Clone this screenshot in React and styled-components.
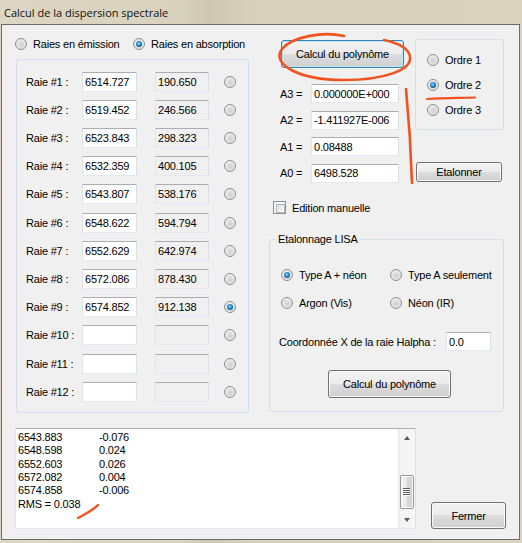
import React from "react";
import styled, { createGlobalStyle, css } from "styled-components";

const GlobalStyle = createGlobalStyle`
  html, body { margin: 0; padding: 0; background: #d9d2bf; }
  body {
    font-family: "Liberation Sans", Arial, sans-serif;
    font-size: 11px;
    letter-spacing: -0.2px;
    color: #000;
  }
  * { box-sizing: border-box; }
`;

const Window = styled.div`
  position: relative;
  width: 522px;
  height: 543px;
  overflow: hidden;
  background: linear-gradient(to right, #ddd6c4 0%, #d8d1bd 35%, #cfc7b2 40%, #d6cfbb 48%, #d9d2bf 100%);
`;

const TitleBar = styled.div`
  height: 24px;
  padding-left: 4px;
  display: flex;
  align-items: center;
  font-family: "Open Sans", "Liberation Sans", sans-serif;
  font-size: 11px;
  letter-spacing: 0;
  color: #111;
`;

const Client = styled.div`
  margin-left: 1px;
  width: 519px;
  height: 516px;
  border: 1px solid #6b6b6b;
  background: #f0f0f0;
  padding-left: 13px;
  display: flex;
  flex-direction: column;
`;

const Top = styled.div`
  display: flex;
  align-items: flex-start;
  gap: 19px;
`;

const LeftCol = styled.div`
  width: 235px;
  display: flex;
  flex-direction: column;
`;

const RightCol = styled.div`
  width: 236px;
  display: flex;
  flex-direction: column;
`;

const ModeRow = styled.div`
  margin-top: 10px;
  height: 17px;
  display: flex;
  align-items: center;
`;

const Option = styled.label`
  display: flex;
  align-items: center;
  gap: 6px;
  height: 16px;
  white-space: nowrap;
  ${(p) => p.$w && css`width: ${p.$w}px;`}
`;

const Radio = styled.span`
  position: relative;
  flex: none;
  width: 12px;
  height: 12px;
  border-radius: 50%;
  border: 1px solid #8e8f8f;
  background: radial-gradient(circle at 55% 60%, #cfcfcf 0%, #e2e2e2 45%, #f7f7f7 100%);
  ${(p) =>
    p.$checked &&
    css`
      &::after {
        content: "";
        position: absolute;
        left: 2px;
        top: 2px;
        width: 6px;
        height: 6px;
        border-radius: 50%;
        background: radial-gradient(circle at 45% 40%, #8fdcff 0%, #2b8fd6 40%, #0d4a7c 80%, #0a3458 100%);
      }
    `}
`;

const Group = styled.div`
  margin: 7px 0 0 1px;
  width: 233px;
  height: 354px;
  border: 1px solid #d5dfe5;
  border-radius: 3px;
  padding: 11.7px 0 0 9px;
  display: flex;
  flex-direction: column;
  gap: 8.2px;
`;

const RaieRow = styled.div`
  display: grid;
  grid-template-columns: 56px 73px 69px 12px;
  height: 20px;
  align-items: center;
`;

const Field = styled.input`
  height: ${(p) => p.$h || 20}px;
  width: ${(p) => p.$w}px;
  padding: 0 0 0 2px;
  border: 1px solid;
  border-color: #abadb3 #dbdfe6 #e3e9ef #e2e3ea;
  background: ${(p) => (p.$ro ? "#f0f0f0" : "#fff")};
  font: inherit;
  letter-spacing: -0.2px;
  color: #000;
  outline: none;
`;

const Button = styled.button`
  width: ${(p) => p.$w}px;
  height: ${(p) => p.$h}px;
  padding: 0;
  border: 1px solid ${(p) => (p.$focus ? "#3c7fb1" : "#707070")};
  border-radius: 3px;
  background: linear-gradient(#f2f2f2 0%, #ebebeb 49%, #dddddd 50%, #cfcfcf 100%);
  box-shadow: inset 0 0 0 1px ${(p) => (p.$focus ? "#bde6f8" : "#fbfbfb")};
  font: inherit;
  letter-spacing: -0.2px;
  color: #000;
`;

const CoeffTop = styled.div`
  margin-top: 14px;
  display: flex;
`;

const CoeffLeft = styled.div`
  width: 146px;
  padding-top: 1px;
  display: flex;
  flex-direction: column;
  & > ${Button} { margin-left: 12px; }
`;

const CoeffList = styled.div`
  margin-top: 16px;
  padding-left: 11px;
  display: flex;
  flex-direction: column;
  gap: 7.5px;
`;

const CoeffRow = styled.div`
  height: 19px;
  display: flex;
  align-items: center;
`;

const CoeffLabel = styled.span`
  width: 31px;
`;

const CoeffRight = styled.div`
  display: flex;
  flex-direction: column;
  & > ${Button} { margin: 32px 0 0 1px; }
`;

const OrdreGroup = styled.div`
  width: 89px;
  height: 91px;
  border: 1px solid #d5dfe5;
  border-radius: 3px;
  padding: 11.7px 0 0 11px;
  display: flex;
  flex-direction: column;
  gap: 9px;
`;

const CheckRow = styled.label`
  margin-top: 18.5px;
  padding-left: 4px;
  height: 13px;
  display: flex;
  align-items: center;
  gap: 6px;
`;

const CheckBox = styled.span`
  width: 13px;
  height: 13px;
  flex: none;
  border: 1px solid #8e8f8f;
  background: #f4f4f4;
  padding: 2px;
  &::before {
    content: "";
    display: block;
    width: 100%;
    height: 100%;
    border: 1px solid #b4b8bd;
    background: linear-gradient(135deg, #d8dade 0%, #eceef0 60%, #fafafa 100%);
  }
`;

const Fieldset = styled.fieldset`
  margin: 18px 0 0 0;
  padding: 0;
  min-width: 0;
  width: 235px;
  border: 1px solid #d5dfe5;
  border-radius: 3px;
`;

const Legend = styled.legend`
  margin-left: 6px;
  padding: 0 2px;
  line-height: 14px;
`;

const LisaBody = styled.div`
  padding: 21px 0 13px 9px;
  display: flex;
  flex-direction: column;
  & > ${Button} { margin: 19px 0 0 49px; }
`;

const RadioGrid = styled.div`
  padding-left: 2px;
  display: grid;
  grid-template-columns: 109px auto;
  row-gap: 12px;
`;

const HalphaRow = styled.div`
  margin-top: 21px;
  height: 19px;
  display: flex;
  align-items: center;
`;

const HalphaLabel = styled.span`
  width: 167px;
`;

const Bottom = styled.div`
  margin-top: 15.3px;
  display: flex;
  align-items: flex-end;
  gap: 15px;
`;

const Log = styled.div`
  width: 401px;
  height: 101px;
  border: 1px solid;
  border-color: #abadb3 #dbdfe6 #e3e9ef #e2e3ea;
  background: #fff;
  display: flex;
`;

const LogText = styled.div`
  flex: 1;
  padding: 1.8px 0 0 2px;
  display: grid;
  grid-template-columns: 81px auto;
  align-content: start;
  line-height: 13.3px;
`;

const LogWide = styled.div`
  grid-column: 1 / span 2;
`;

const ScrollBar = styled.div`
  width: 17px;
  display: flex;
  flex-direction: column;
  background: linear-gradient(to right, #e6e6e6 0px, #f3f3f3 2px, #f6f6f6 100%);
`;

const Arrow = styled.div`
  height: 17px;
  display: flex;
  align-items: center;
  justify-content: center;
  &::before {
    content: "";
    border-left: 3.5px solid transparent;
    border-right: 3.5px solid transparent;
    ${(p) =>
      p.$down
        ? css`border-top: 4px solid #5a5a5a;`
        : css`border-bottom: 4px solid #5a5a5a;`}
  }
`;

const Track = styled.div`
  flex: 1;
  padding: 28.7px 1px 0 1.5px;
`;

const Thumb = styled.div`
  height: 34px;
  border: 1px solid #979797;
  border-radius: 2px;
  background: linear-gradient(to right, #f4f4f4 0%, #e8e8e8 50%, #d9d9d9 51%, #cfcfcf 100%);
  box-shadow: inset 0 0 0 1px #fafafa;
  display: flex;
  flex-direction: column;
  align-items: center;
  justify-content: center;
  gap: 1px;
`;

const Grip = styled.span`
  width: 7px;
  height: 1px;
  background: #5c5c5c;
  box-shadow: 0 1px 0 #fff;
`;

const Overlay = styled.svg`
  position: absolute;
  left: 0;
  top: 0;
  pointer-events: none;
`;

const raies = [
  ["6514.727", "190.650"],
  ["6519.452", "246.566"],
  ["6523.843", "298.323"],
  ["6532.359", "400.105"],
  ["6543.807", "538.176"],
  ["6548.622", "594.794"],
  ["6552.629", "642.974"],
  ["6572.086", "878.430"],
  ["6574.852", "912.138"],
  ["", ""],
  ["", ""],
  ["", ""],
];

const coeffs = [
  ["A3 =", "0.000000E+000"],
  ["A2 =", "-1.411927E-006"],
  ["A1 =", "0.08488"],
  ["A0 =", "6498.528"],
];

const log = [
  ["6543.883", "-0.076"],
  ["6548.598", "0.024"],
  ["6552.603", "0.026"],
  ["6572.082", "0.004"],
  ["6574.858", "-0.006"],
];

export default function App() {
  return (
    <Window>
      <GlobalStyle />
      <TitleBar>Calcul de la dispersion spectrale</TitleBar>
      <Client>
        <Top>
          <LeftCol>
            <ModeRow>
              <Option $w={118}>
                <Radio />
                Raies en émission
              </Option>
              <Option>
                <Radio $checked />
                Raies en absorption
              </Option>
            </ModeRow>
            <Group>
              {raies.map(([lambda, x], i) => (
                <RaieRow key={i}>
                  <span>Raie #{i + 1} :</span>
                  <Field $w={55} defaultValue={lambda} />
                  <Field $w={54} $ro readOnly defaultValue={x} />
                  <Radio $checked={i === 8} />
                </RaieRow>
              ))}
            </Group>
          </LeftCol>

          <RightCol>
            <CoeffTop>
              <CoeffLeft>
                <Button $w={123} $h={28} $focus>Calcul du polynôme</Button>
                <CoeffList>
                  {coeffs.map(([label, value]) => (
                    <CoeffRow key={label}>
                      <CoeffLabel>{label}</CoeffLabel>
                      <Field $w={88} $h={19} defaultValue={value} />
                    </CoeffRow>
                  ))}
                </CoeffList>
              </CoeffLeft>
              <CoeffRight>
                <OrdreGroup>
                  <Option><Radio />Ordre 1</Option>
                  <Option><Radio $checked />Ordre 2</Option>
                  <Option><Radio />Ordre 3</Option>
                </OrdreGroup>
                <Button $w={86} $h={20}>Etalonner</Button>
              </CoeffRight>
            </CoeffTop>

            <CheckRow>
              <CheckBox />
              Edition manuelle
            </CheckRow>

            <Fieldset>
              <Legend>Etalonnage LISA</Legend>
              <LisaBody>
                <RadioGrid>
                  <Option><Radio $checked />Type A + néon</Option>
                  <Option><Radio />Type A seulement</Option>
                  <Option><Radio />Argon (Vis)</Option>
                  <Option><Radio />Néon (IR)</Option>
                </RadioGrid>
                <HalphaRow>
                  <HalphaLabel>Coordonnée X de la raie Halpha :</HalphaLabel>
                  <Field $w={45} $h={19} defaultValue="0.0" />
                </HalphaRow>
                <Button $w={123} $h={28}>Calcul du polynôme</Button>
              </LisaBody>
            </Fieldset>
          </RightCol>
        </Top>

        <Bottom>
          <Log>
            <LogText>
              {log.map(([a, b]) => (
                <React.Fragment key={a}>
                  <div>{a}</div>
                  <div>{b}</div>
                </React.Fragment>
              ))}
              <LogWide>RMS = 0.038</LogWide>
            </LogText>
            <ScrollBar>
              <Arrow />
              <Track>
                <Thumb>
                  <Grip />
                  <Grip />
                  <Grip />
                  <Grip />
                </Thumb>
              </Track>
              <Arrow $down />
            </ScrollBar>
          </Log>
          <Button $w={75} $h={27}>Fermer</Button>
        </Bottom>
      </Client>

      <Overlay width="522" height="543" viewBox="0 0 522 543">
        <g fill="none" stroke="#f2521e" strokeLinecap="round">
          <path
            strokeWidth="2.6"
            d="M344 36 C322 31 292 37 282 49 C271 63 296 80 344 80 C384 80 412 70 410 57 C409 48 398 43 384 40"
          />
          <path strokeWidth="2.6" d="M406 89 C409 120 411 150 412 183" />
          <path strokeWidth="2.2" d="M427 99 C445 98 460 98 475 97.5" />
          <path strokeWidth="2.4" d="M78 518 C85 514 92 511 98 505" />
        </g>
      </Overlay>
    </Window>
  );
}
